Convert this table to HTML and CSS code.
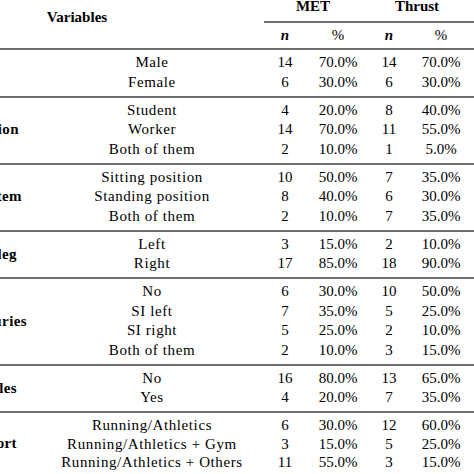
FILE: index.html
```html
<!DOCTYPE html>
<html lang="en">
<head>
<meta charset="utf-8">
<title>Variables table</title>
<link rel="stylesheet" href="styles.css">
</head>
<body>
<div class="table">
  <div class="head">
    <div class="head-var">Variables</div>
    <div class="head-groups">
      <div class="head-top">
        <div class="hg hg-met">MET</div>
        <div class="hg hg-thrust">Thrust</div>
      </div>
      <div class="head-sub cols">
        <div class="hn">n</div>
        <div class="hp">%</div>
        <div class="hn">n</div>
        <div class="hp">%</div>
      </div>
    </div>
  </div>

  <div class="group">
    <div class="label l-sex">Sex</div>
    <div class="rows">
      <div class="row"><div class="cat">Male</div><div class="cols"><div>14</div><div>70.0%</div><div>14</div><div>70.0%</div></div></div>
      <div class="row"><div class="cat">Female</div><div class="cols"><div>6</div><div>30.0%</div><div>6</div><div>30.0%</div></div></div>
    </div>
  </div>

  <div class="group">
    <div class="label l-occ">Occupation</div>
    <div class="rows">
      <div class="row"><div class="cat">Student</div><div class="cols"><div>4</div><div>20.0%</div><div>8</div><div>40.0%</div></div></div>
      <div class="row"><div class="cat">Worker</div><div class="cols"><div>14</div><div>70.0%</div><div>11</div><div>55.0%</div></div></div>
      <div class="row"><div class="cat">Both of them</div><div class="cols"><div>2</div><div>10.0%</div><div>1</div><div>5.0%</div></div></div>
    </div>
  </div>

  <div class="group">
    <div class="label l-work">Work system</div>
    <div class="rows">
      <div class="row"><div class="cat">Sitting position</div><div class="cols"><div>10</div><div>50.0%</div><div>7</div><div>35.0%</div></div></div>
      <div class="row"><div class="cat">Standing position</div><div class="cols"><div>8</div><div>40.0%</div><div>6</div><div>30.0%</div></div></div>
      <div class="row"><div class="cat">Both of them</div><div class="cols"><div>2</div><div>10.0%</div><div>7</div><div>35.0%</div></div></div>
    </div>
  </div>

  <div class="group">
    <div class="label">Dominant leg</div>
    <div class="rows">
      <div class="row"><div class="cat">Left</div><div class="cols"><div>3</div><div>15.0%</div><div>2</div><div>10.0%</div></div></div>
      <div class="row"><div class="cat">Right</div><div class="cols"><div>17</div><div>85.0%</div><div>18</div><div>90.0%</div></div></div>
    </div>
  </div>

  <div class="group">
    <div class="label l-inj">Previous injuries</div>
    <div class="rows">
      <div class="row"><div class="cat">No</div><div class="cols"><div>6</div><div>30.0%</div><div>10</div><div>50.0%</div></div></div>
      <div class="row"><div class="cat">SI left</div><div class="cols"><div>7</div><div>35.0%</div><div>5</div><div>25.0%</div></div></div>
      <div class="row"><div class="cat">SI right</div><div class="cols"><div>5</div><div>25.0%</div><div>2</div><div>10.0%</div></div></div>
      <div class="row"><div class="cat">Both of them</div><div class="cols"><div>2</div><div>10.0%</div><div>3</div><div>15.0%</div></div></div>
    </div>
  </div>

  <div class="group">
    <div class="label">Insoles</div>
    <div class="rows">
      <div class="row"><div class="cat">No</div><div class="cols"><div>16</div><div>80.0%</div><div>13</div><div>65.0%</div></div></div>
      <div class="row"><div class="cat">Yes</div><div class="cols"><div>4</div><div>20.0%</div><div>7</div><div>35.0%</div></div></div>
    </div>
  </div>

  <div class="group">
    <div class="label">Sport</div>
    <div class="rows rows-tight">
      <div class="row"><div class="cat">Running/Athletics</div><div class="cols"><div>6</div><div>30.0%</div><div>12</div><div>60.0%</div></div></div>
      <div class="row"><div class="cat">Running/Athletics + Gym</div><div class="cols"><div>3</div><div>15.0%</div><div>5</div><div>25.0%</div></div></div>
      <div class="row"><div class="cat">Running/Athletics + Others</div><div class="cols"><div>11</div><div>55.0%</div><div>3</div><div>15.0%</div></div></div>
    </div>
  </div>
</div>
</body>
</html>
```

FILE: styles.css
```css
html, body {
  margin: 0;
  padding: 0;
  background: #ffffff;
  overflow: hidden;
}

body {
  width: 474px;
  height: 474px;
  font-family: "Liberation Serif", "Times New Roman", serif;
  font-size: 15px;
  color: #000000;
}

.table {
  width: 584px;
  margin: -12px 0 0 -110px;
}

/* header */
.head {
  display: flex;
}

.head-var {
  width: 374px;
  display: flex;
  align-items: center;
  justify-content: center;
  font-weight: bold;
  padding-bottom: 1px;
}

.head-groups {
  width: 210px;
  display: flex;
  flex-direction: column;
}

.head-top {
  display: flex;
  height: 33px;
  border-bottom: 2px solid #6e6e6e;
  font-weight: bold;
}

.hg {
  display: flex;
  align-items: center;
  justify-content: center;
  padding-top: 4px;
  box-sizing: border-box;
}

.hg-met {
  width: 96px;
  padding-left: 2px;
}

.hg-thrust {
  width: 114px;
}

.head-sub {
  height: 25px;
  align-items: center;
}

.hn {
  font-weight: bold;
  font-style: italic;
}

/* columns for numbers */
.cols {
  display: grid;
  grid-template-columns: 42px 64px 38px 66px;
  text-align: center;
  width: 210px;
}

/* body */
.group {
  display: flex;
  border-top: 2px solid #6e6e6e;
  padding: 3px 0 3.5px;
}

.label {
  width: 150px;
  box-sizing: border-box;
  padding-right: 23px;
  display: flex;
  align-items: center;
  justify-content: flex-end;
  font-weight: bold;
  white-space: nowrap;
  letter-spacing: 0.4px;
}

.l-sex { padding-right: 48px; }
.l-occ { padding-right: 21px; }
.l-work { padding-right: 18px; }
.l-inj { padding-right: 13px; }

.rows {
  display: flex;
  flex-direction: column;
}

.row {
  display: flex;
  line-height: 19.5px;
  height: 19.5px;
}

.rows-tight .row {
  line-height: 18.5px;
  height: 18.5px;
}

.cat {
  width: 224px;
  text-align: center;
  white-space: nowrap;
  letter-spacing: 0.6px;
}
```
